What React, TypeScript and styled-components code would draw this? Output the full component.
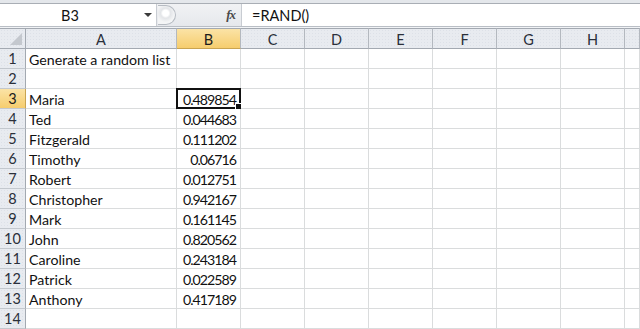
import React from 'react';
import styled, { createGlobalStyle, css } from 'styled-components';

const GlobalStyle = createGlobalStyle`
  html, body {
    margin: 0;
    padding: 0;
    background: #ffffff;
    overflow: hidden;
  }
  body {
    font-family: Lato, "Liberation Sans", Arial, sans-serif;
  }
`;

const Sheet = styled.div`
  width: 640px;
  height: 329px;
  overflow: hidden;
  background: #ffffff;
  display: flex;
  flex-direction: column;
`;

const FormulaArea = styled.div`
  background: #e4e7eb;
  padding-top: 3px;
`;

const FormulaBar = styled.div`
  display: flex;
  height: 22px;
  border-top: 1px solid #a9aeb5;
  border-bottom: 1px solid #b9bec5;
  background: #ffffff;
`;

const NameBox = styled.div`
  position: relative;
  width: 156px;
  padding-right: 16px;
  box-sizing: border-box;
  display: flex;
  align-items: center;
  justify-content: center;
  font-size: 14.5px;
  color: #111;
`;

const DropArrow = styled.span`
  position: absolute;
  right: 4px;
  top: 9px;
  width: 0;
  height: 0;
  border-left: 4px solid transparent;
  border-right: 4px solid transparent;
  border-top: 4px solid #3b3b3b;
`;

const FxZone = styled.div`
  width: 85px;
  display: flex;
  align-items: center;
  justify-content: space-between;
  padding-right: 6px;
  background: linear-gradient(#f1f2f4, #e6e8ec);
  border-left: 1px solid #c8ccd2;
  box-sizing: border-box;
`;

const Splitter = styled.div`
  width: 18px;
  height: 20px;
  margin-left: 1px;
  border-radius: 0 10px 10px 0;
  border: 1px solid #b6bbc2;
  border-left: none;
  background: radial-gradient(circle at 45% 40%, #ffffff 0 3px, #e3e5e8 5px, #f4f5f6 9px);
  box-sizing: border-box;
`;

const FxLabel = styled.span`
  font-family: "Liberation Serif", "DejaVu Serif", serif;
  font-style: italic;
  font-weight: bold;
  font-size: 13px;
  color: #4a4a4a;
  letter-spacing: -1px;
`;

const FormulaInput = styled.div`
  flex: 1;
  display: flex;
  align-items: center;
  padding-left: 10px;
  font-size: 14.5px;
  color: #111;
  border-left: 1px solid #c8ccd2;
`;

const Gap = styled.div`
  height: 3px;
  background: #f1f3f6;
`;

const Grid = styled.div`
  display: grid;
  grid-template-columns: 26px 151px repeat(7, 64px) 1fr;
  grid-auto-rows: 20px;
  grid-template-rows: 21px;
`;

const headerBase = css`
  background-color: #e8ebf0;
  background-image: radial-gradient(#dde1e8 0.6px, transparent 0.7px);
  background-size: 3px 3px;
  color: #2a2f3a;
  font-size: 14.5px;
  display: flex;
  align-items: center;
  box-sizing: border-box;
`;

const selectedHeader = css`
  background: linear-gradient(#fbe3a6, #f6cd6e);
  color: #1c1c1c;
`;

const Corner = styled.div`
  ${headerBase};
  position: relative;
  border-top: 1px solid #a3a9b1;
  border-right: 1px solid #a3a9b1;
  border-bottom: 1px solid #a3a9b1;
`;

const CornerTriangle = styled.span`
  position: absolute;
  right: 3px;
  bottom: 3px;
  width: 0;
  height: 0;
  border-left: 12px solid transparent;
  border-bottom: 12px solid #c4c8ce;
`;

const ColHeader = styled.div<{ $selected?: boolean }>`
  ${headerBase};
  justify-content: center;
  padding-top: 1px;
  border-top: 1px solid #a3a9b1;
  border-right: 1px solid #b3b8bf;
  border-bottom: 1px solid #a3a9b1;
  ${(p) => p.$selected && selectedHeader};
  ${(p) => p.$selected && css`border-bottom-color: #c9a451;`};
`;

const RowHeader = styled.div<{ $selected?: boolean }>`
  ${headerBase};
  justify-content: center;
  border-right: 1px solid #a3a9b1;
  border-bottom: 1px solid #c3c8ce;
  ${(p) => p.$selected && selectedHeader};
  ${(p) => p.$selected && css`border-right-color: #c9a451;`};
`;

const Cell = styled.div<{ $numeric?: boolean }>`
  position: relative;
  box-sizing: border-box;
  border-right: 1px solid #dadcdd;
  border-bottom: 1px solid #dadcdd;
  font-size: 14.2px;
  color: #111;
  display: flex;
  align-items: center;
  justify-content: ${(p) => (p.$numeric ? 'flex-end' : 'flex-start')};
  letter-spacing: ${(p) => (p.$numeric ? '-1px' : '0')};
  padding: 1px ${(p) => (p.$numeric ? '4px' : '2px')} 0 3px;
  white-space: nowrap;
`;

const ActiveFrame = styled.div`
  position: absolute;
  left: -1px;
  top: -1px;
  right: -1px;
  bottom: -1px;
  border: 2px solid #111;
  pointer-events: none;
`;

const FillHandle = styled.span`
  position: absolute;
  right: -3px;
  bottom: -3px;
  width: 5px;
  height: 5px;
  background: #111;
  border: 1px solid #fff;
`;

// column I is only partly on screen, its letter falls outside the window
const columns = ['A', 'B', 'C', 'D', 'E', 'F', 'G', 'H', ''];

const rows: [string, string][] = [
  ['Generate a random list', ''],
  ['', ''],
  ['Maria', '0.489854'],
  ['Ted', '0.044683'],
  ['Fitzgerald', '0.111202'],
  ['Timothy', '0.06716'],
  ['Robert', '0.012751'],
  ['Christopher', '0.942167'],
  ['Mark', '0.161145'],
  ['John', '0.820562'],
  ['Caroline', '0.243184'],
  ['Patrick', '0.022589'],
  ['Anthony', '0.417189'],
  ['', ''],
];

export default function App() {
  return (
    <Sheet>
      <GlobalStyle />
      <FormulaArea>
        <FormulaBar>
          <NameBox>
            B3
            <DropArrow />
          </NameBox>
          <FxZone>
            <Splitter />
            <FxLabel>fx</FxLabel>
          </FxZone>
          <FormulaInput>=RAND()</FormulaInput>
        </FormulaBar>
      </FormulaArea>
      <Gap />
      <Grid>
        <Corner>
          <CornerTriangle />
        </Corner>
        {columns.map((c, i) => (
          <ColHeader key={i} $selected={c === 'B'}>
            {c}
          </ColHeader>
        ))}
        {rows.map(([name, value], i) => (
          <React.Fragment key={i}>
            <RowHeader $selected={i === 2}>{i + 1}</RowHeader>
            <Cell>{name}</Cell>
            <Cell $numeric>
              {value}
              {i === 2 && (
                <ActiveFrame>
                  <FillHandle />
                </ActiveFrame>
              )}
            </Cell>
            {columns.slice(2).map((c, j) => (
              <Cell key={j} />
            ))}
          </React.Fragment>
        ))}
      </Grid>
    </Sheet>
  );
}
